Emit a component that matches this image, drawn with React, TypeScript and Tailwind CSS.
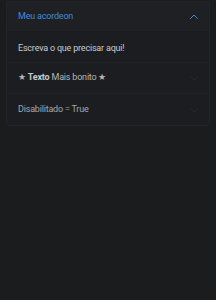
import React from "react";

const ChevronUp = ({ className }: { className?: string }) => (
  <svg width="12" height="12" viewBox="0 0 24 24" fill="none" stroke="currentColor" strokeWidth="2" strokeLinecap="round" strokeLinejoin="round" className={className}>
    <path d="M5 15l7-7 7 7" />
  </svg>
);
const ChevronDown = ({ className }: { className?: string }) => (
  <svg width="12" height="12" viewBox="0 0 24 24" fill="none" stroke="currentColor" strokeWidth="2" strokeLinecap="round" strokeLinejoin="round" className={className}>
    <path d="M5 9l7 7 7-7" />
  </svg>
);

export default function App() {
  return (
    <div className="h-[300px] w-[216px] bg-[#1b1c1e] px-[6px] pt-[1px] text-[9px] tracking-[-0.2px] text-[#c9cacd]" style={{ fontFamily: 'Roboto, "Noto Sans", sans-serif' }}>
      <div className="flex flex-col border border-[#232427] rounded-b-[3px] bg-[#1c1d20]">
        <div className="flex h-[30px] items-center justify-between bg-[#1f2023] pl-[11px] pr-[9px] border-b border-[#18191b] text-[#3f8bd8]">
          <span>Meu acordeon</span>
          <ChevronUp className="text-[#3f8bd8]" />
        </div>
        <div className="flex h-[31px] items-center pt-[3px] pl-[11px] border-b border-[#212225]">
          <span>Escreva o que precisar aqui!</span>
        </div>
        <div className="flex h-[31px] items-center justify-between pl-[11px] pr-[9px] border-b border-[#212225] text-[#b4b5b8]">
          <span>★ <b className="font-bold text-[#c9cacd]">Texto</b> Mais bonito ★</span>
          <ChevronDown className="text-[#26272a]" />
        </div>
        <div className="flex h-[31px] items-center justify-between pl-[11px] pr-[9px] pt-[1px] text-[#a6a7aa]">
          <span>Disabilitado = True</span>
          <ChevronDown className="text-[#26272a]" />
        </div>
      </div>
    </div>
  );
}
